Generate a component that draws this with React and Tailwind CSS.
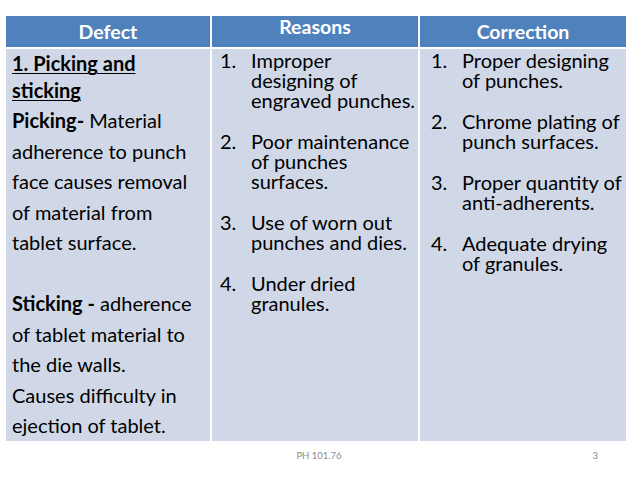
const reasons = [
  ['Improper', 'designing of', 'engraved punches.'],
  ['Poor maintenance', 'of punches', 'surfaces.'],
  ['Use of worn out', 'punches and dies.'],
  ['Under dried', 'granules.'],
];

const corrections = [
  ['Proper designing', 'of punches.'],
  ['Chrome plating of', 'punch surfaces.'],
  ['Proper quantity of', 'anti-adherents.'],
  ['Adequate drying', 'of granules.'],
];

function NumberedList({ items }) {
  return (
    <ol className="pt-[1px]">
      {items.map((lines, i) => (
        <li key={i} className={`flex ${i > 0 ? 'mt-[21px]' : ''}`}>
          <span className="w-[31px] shrink-0">{i + 1}.</span>
          <span>
            {lines.map((line) => (
              <span key={line} className="block whitespace-nowrap">
                {line}
              </span>
            ))}
          </span>
        </li>
      ))}
    </ol>
  );
}

export default function App() {
  return (
    <main
      className="relative h-[478px] w-[638px] overflow-hidden bg-white text-black"
      style={{ fontFamily: 'Lato, "Open Sans", sans-serif' }}
    >
      <div className="ml-[6px] mt-[16px] grid w-[620px] grid-cols-[204px_206px_206px] grid-rows-[31px_392px] gap-[2px] bg-white">
        <div className="flex items-center justify-center bg-[#4f81bd] text-[19.5px] font-bold text-white">
          Defect
        </div>
        <div className="flex items-start justify-center bg-[#4f81bd] text-[19.5px] font-bold leading-[22px] text-white">
          Reasons
        </div>
        <div className="flex items-center justify-center bg-[#4f81bd] text-[19.5px] font-bold text-white">
          Correction
        </div>

        <div className="bg-[#d0d8e8] pl-[6px] pt-[1px] text-[20px]">
          <p className="whitespace-nowrap font-bold leading-[27px] underline decoration-1 underline-offset-2">
            1. Picking and
            <br />
            sticking
          </p>
          <p className="mt-[1px] whitespace-nowrap leading-[30.5px]">
            <b>Picking-</b> Material
            <br />
            adherence to punch
            <br />
            face causes removal
            <br />
            of material from
            <br />
            tablet surface.
            <br />
            <br />
            <b>Sticking -</b> adherence
            <br />
            of tablet material to
            <br />
            the die walls.
            <br />
            Causes difficulty in
            <br />
            ejection of tablet.
          </p>
        </div>

        <div className="bg-[#d0d8e8] pl-[8px] text-[20px] leading-[20px]">
          <NumberedList items={reasons} />
        </div>

        <div className="bg-[#d0d8e8] pl-[11px] text-[20px] leading-[20px]">
          <NumberedList items={corrections} />
        </div>
      </div>

      <footer className="mt-[8px] grid w-[638px] grid-cols-[1fr_auto_1fr] text-[9.5px] text-[#8a8a8a]">
        <span />
        <span>PH 101.76</span>
        <span className="pr-[40px] text-right">3</span>
      </footer>
    </main>
  );
}
